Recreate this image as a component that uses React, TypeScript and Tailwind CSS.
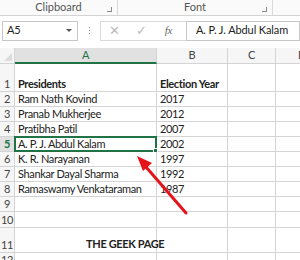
import React from "react";

const rows = [
  { n: "1", a: "Presidents", b: "Election Year", h: "h-[28px]", bold: true },
  { n: "2", a: "Ram Nath Kovind", b: "2017", h: "h-[15px]" },
  { n: "3", a: "Pranab Mukherjee", b: "2012", h: "h-[15px]" },
  { n: "4", a: "Pratibha Patil", b: "2007", h: "h-[15px]" },
  { n: "5", a: "A. P. J. Abdul Kalam", b: "2002", h: "h-[15px]", sel: true },
  { n: "6", a: "K. R. Narayanan", b: "1997", h: "h-[15px]" },
  { n: "7", a: "Shankar Dayal Sharma", b: "1992", h: "h-[15px]" },
  { n: "8", a: "Ramaswamy Venkataraman", b: "1987", h: "h-[15px]" },
  { n: "9", a: "", b: "", h: "h-[15px]" },
  { n: "10", a: "", b: "", h: "h-[16px]" },
  { n: "11", a: "THE GEEK PAGE", b: "", h: "h-[25px]", geek: true },
  { n: "12", a: "", b: "", h: "h-[15px]" },
];

const App = () => {
  return (
    <div className="relative w-[300px] h-[260px] overflow-hidden bg-white font-['Lato',sans-serif] text-[#222]">
      {/* ribbon group labels */}
      <div className="flex h-[16px] border-b border-[#d4d4d4] bg-[#fafafa] text-[11px] text-[#555]">
        <div className="relative w-[118px] border-r border-[#dadada] flex items-center justify-center">
          Clipboard
          <span className="absolute right-[5px] top-[7px] w-[5px] h-[5px] border-r border-b border-[#888]" />
        </div>
        <div className="relative w-[155px] border-r border-[#dadada] flex items-center justify-center">
          Font
          <span className="absolute right-[5px] top-[7px] w-[5px] h-[5px] border-r border-b border-[#888]" />
        </div>
      </div>

      {/* formula bar */}
      <div className="flex items-center h-[26px] pt-[3px] text-[11px] tracking-[-0.1px]">
        <div className="ml-[2px] w-[76px] h-[20px] border border-[#c6c6c6] flex items-center justify-between px-[4px]">
          <span>A5</span>
          <span className="w-0 h-0 border-l-[3px] border-r-[3px] border-t-[3px] border-l-transparent border-r-transparent border-t-[#555] mr-[1px]" />
        </div>
        <div className="w-[22px] flex flex-col items-center gap-[2px]">
          <span className="w-[1px] h-[1px] bg-[#999]" />
          <span className="w-[1px] h-[1px] bg-[#999]" />
          <span className="w-[1px] h-[1px] bg-[#999]" />
        </div>
        <div className="h-[20px] w-[86px] border border-[#dadada] border-r-0 flex items-center text-[#bbb]">
          <span className="w-[27px] text-center text-[13px]">✕</span>
          <span className="w-[27px] text-center text-[13px]">✓</span>
          <span className="w-[27px] text-center italic font-['Liberation_Serif',serif] text-[#666] text-[11px]">fx</span>
        </div>
        <div className="flex-1 h-[20px] border border-[#c6c6c6] flex items-center pl-[9px] whitespace-nowrap overflow-hidden">
          A. P. J. Abdul Kalam
        </div>
      </div>

      {/* sheet */}
      <div className="mt-[6px] grid grid-cols-[15px_142px_71px_48px_1fr] text-[11px] tracking-[-0.35px]">
        <div className="h-[16px] border-r border-b border-[#d4d4d4] bg-[#f6f6f6] relative">
          <span className="absolute right-[2px] bottom-[2px] w-0 h-0 border-l-[8px] border-t-[8px] border-l-transparent border-t-transparent border-r-0 border-b-[8px] border-b-[#dcdcdc]" />
        </div>
        <div className="h-[16px] border-r border-[#d4d4d4] border-b-2 border-b-[#217346] bg-[#e1e1e1] text-[#217346] flex items-center justify-center">A</div>
        <div className="h-[16px] border-r border-b border-[#d4d4d4] bg-[#f6f6f6] text-[#444] flex items-center justify-center">B</div>
        <div className="h-[16px] border-r border-b border-[#d4d4d4] bg-[#f6f6f6] text-[#444] flex items-center justify-center">C</div>
        <div className="h-[16px] border-b border-[#d4d4d4] bg-[#f6f6f6] text-[#444] flex items-center pl-[22px]">D</div>

        {rows.map((r) => (
          <React.Fragment key={r.n}>
            <div
              className={`${r.h} border-r border-b border-[#d4d4d4] flex items-end justify-center leading-[14px] ${
                r.sel ? "bg-[#e1e1e1] text-[#217346] font-bold border-r-[#217346]" : "bg-[#f6f6f6] text-[#444]"
              }`}
            >
              {r.n}
            </div>
            <div
              className={`${r.h} border-r border-b border-[#d4d4d4] flex items-end leading-[14px] whitespace-nowrap overflow-visible relative ${
                r.bold ? "font-bold" : ""
              } ${r.geek ? "pl-[71px] font-bold pb-[1px]" : "pl-[3px]"}`}
            >
              {r.sel && (
                <span className="absolute -left-[1px] -top-[1px] -right-[1px] -bottom-[1px] border-2 border-[#217346]">
                  <span className="absolute -right-[3px] -bottom-[3px] w-[5px] h-[5px] bg-[#217346] border border-white" />
                </span>
              )}
              <span className="relative">{r.a}</span>
            </div>
            <div
              className={`${r.h} border-r border-b border-[#d4d4d4] flex items-end pl-[3px] leading-[14px] whitespace-nowrap ${
                r.bold ? "font-bold" : ""
              }`}
            >
              {r.b}
            </div>
            <div className={`${r.h} border-r border-b border-[#d4d4d4]`} />
            <div className={`${r.h} border-b border-[#d4d4d4]`} />
          </React.Fragment>
        ))}
      </div>

      {/* red arrow */}
      <svg className="absolute left-0 top-0 pointer-events-none" width="300" height="260">
        <line x1="186" y1="213" x2="146" y2="167" stroke="#e5141b" strokeWidth="3" strokeLinecap="round" />
        <polygon points="137,156 152,163 143,171" fill="#e5141b" />
      </svg>
    </div>
  );
};

export default App;
